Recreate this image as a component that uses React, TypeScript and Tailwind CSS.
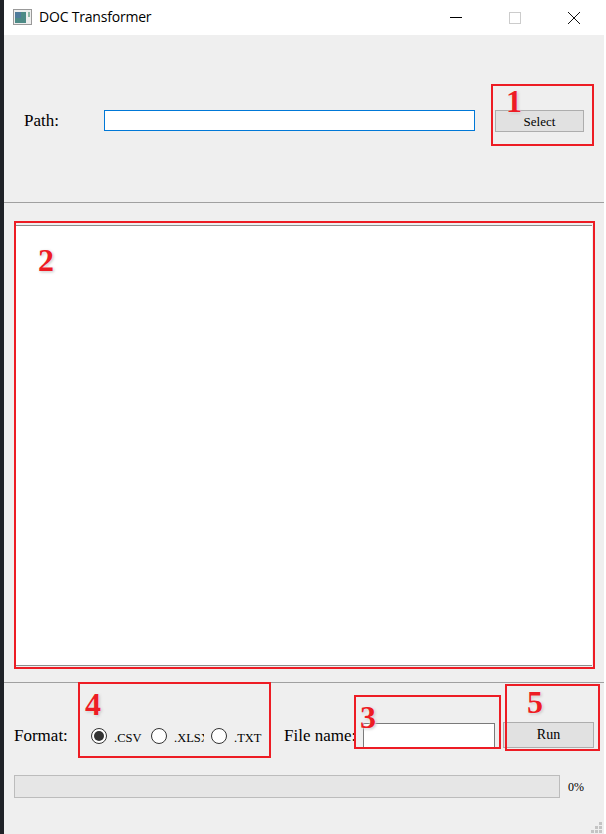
const serif = "font-['Liberation_Serif',serif]";

function Mark({ className, children }: { className: string; children?: React.ReactNode }) {
  return (
    <div className={`absolute border-2 border-[#ed1c24] pointer-events-none ${className}`}>
      {children}
    </div>
  );
}

function Digit({ className, children }: { className: string; children: string }) {
  return (
    <span
      className={`absolute font-['Liberation_Serif',serif] font-bold text-[32px] leading-none text-[#ed1c24] [text-shadow:0_0_2px_#fff,1px_1px_3px_#bbb] ${className}`}
    >
      {children}
    </span>
  );
}

function Radio({ checked, label, className }: { checked?: boolean; label: string; className: string }) {
  return (
    <div className={`flex items-center ${className}`}>
      <span className="w-4 h-4 shrink-0 rounded-full border border-[#333] bg-white flex items-center justify-center">
        {checked && <span className="w-[10px] h-[10px] rounded-full bg-[#333]" />}
      </span>
      <span className="ml-[7px] w-[30px] overflow-hidden whitespace-nowrap text-[12.5px] leading-none pt-[5px]">{label}</span>
    </div>
  );
}

export default function App() {
  return (
    <div className="relative w-[606px] h-[834px] flex bg-white overflow-hidden text-black">
      <div className="w-1 bg-[#1f2227]" />
      <div className={`w-[600px] flex flex-col bg-[#efefef] ${serif}`}>
        {/* title bar */}
        <div className="h-[35px] bg-white flex items-center shrink-0">
          <svg width="20" height="17" viewBox="0 0 20 17" className="ml-[9px]">
            <rect x="0.5" y="0.5" width="18" height="15" fill="#eee" stroke="#999" />
            <rect x="2" y="3" width="11" height="11" fill="#4d8a86" />
            <rect x="2" y="3" width="6" height="6" fill="#4f7b9b" />
            <rect x="15" y="3" width="2" height="5" fill="#8fb7a6" />
          </svg>
          <span className="ml-[6px] pb-[2px] text-[14px] font-['Open_Sans',sans-serif] tracking-[-0.2px]">DOC Transformer</span>
          <div className="ml-auto flex items-center">
            <span className="w-3 h-px bg-black" />
            <span className="ml-[47px] w-3 h-3 border border-[#ccc]" />
            <svg width="14" height="14" viewBox="0 0 14 14" className="ml-[46px] mr-[23px]">
              <path d="M1 1 L13 13 M13 1 L1 13" stroke="#111" fill="none" />
            </svg>
          </div>
        </div>

        {/* path row */}
        <div className="h-[168px] shrink-0 flex items-start pt-[75px] border-b border-[#a0a0a0]">
          <span className="ml-5 w-20 text-[17px] leading-5 pt-px">Path:</span>
          <div className="w-[371px] h-[21px] bg-white border border-[#0078d7]" />
          <button className="ml-5 w-[89px] h-[22px] bg-[#e1e1e1] border border-[#adadad] text-[13px] leading-none pt-px">Select</button>
        </div>

        {/* file list */}
        <div className="flex-1 px-3 pt-[22px] pb-4 border-b border-[#a0a0a0]">
          <div className="h-[441px] bg-white border-y border-[#8c8c8c]" />
        </div>

        {/* options */}
        <div className="h-[151px] shrink-0 flex flex-col">
          <div className="flex items-center pt-[39px] pl-[10px] h-[66px]">
            <span className="w-[77px] text-[17px] leading-5">Format:</span>
            <Radio checked label=".CSV" className="w-[60px]" />
            <Radio label=".XLSX" className="w-[60px]" />
            <Radio label=".TXT" className="w-[73px]" />
            <span className="w-[79px] text-[17px] leading-5 whitespace-nowrap">File name:</span>
            <div className="w-[132px] h-[25px] bg-white border border-[#7a7a7a]" />
            <button className="ml-2 -mt-px w-[91px] h-[26px] bg-[#e1e1e1] border border-[#adadad] text-[14px] leading-none">Run</button>
          </div>
          <div className="flex items-center mt-[26px] pl-[10px]">
            <div className="w-[546px] h-[23px] bg-[#e6e6e6] border border-[#bcbcbc]" />
            <span className="ml-2 text-[12px] leading-none">0%</span>
          </div>
        </div>
      </div>
      <div className="w-[2px] bg-white" />

      {/* size grip */}
      <svg width="12" height="12" viewBox="0 0 12 12" className="absolute left-[591px] top-[822px]">
        <path d="M8 0h3v3H8zM4 4h3v3H4zM8 4h3v3H8zM0 8h3v3H0zM4 8h3v3H4zM8 8h3v3H8z" fill="#c4c4c4" />
      </svg>

      {/* annotations */}
      <Mark className="left-[491px] top-[84px] w-[103px] h-[62px]" />
      <Mark className="left-[14px] top-[221px] w-[581px] h-[448px]" />
      <Mark className="left-[354px] top-[695px] w-[147px] h-[54px]" />
      <Mark className="left-[78px] top-[682px] w-[193px] h-[76px]" />
      <Mark className="left-[505px] top-[684px] w-[95px] h-[67px]" />
      <Digit className="left-[506px] top-[85px]">1</Digit>
      <Digit className="left-[38px] top-[244px]">2</Digit>
      <Digit className="left-[360px] top-[701px]">3</Digit>
      <Digit className="left-[85px] top-[688px]">4</Digit>
      <Digit className="left-[527px] top-[686px]">5</Digit>
    </div>
  );
}
